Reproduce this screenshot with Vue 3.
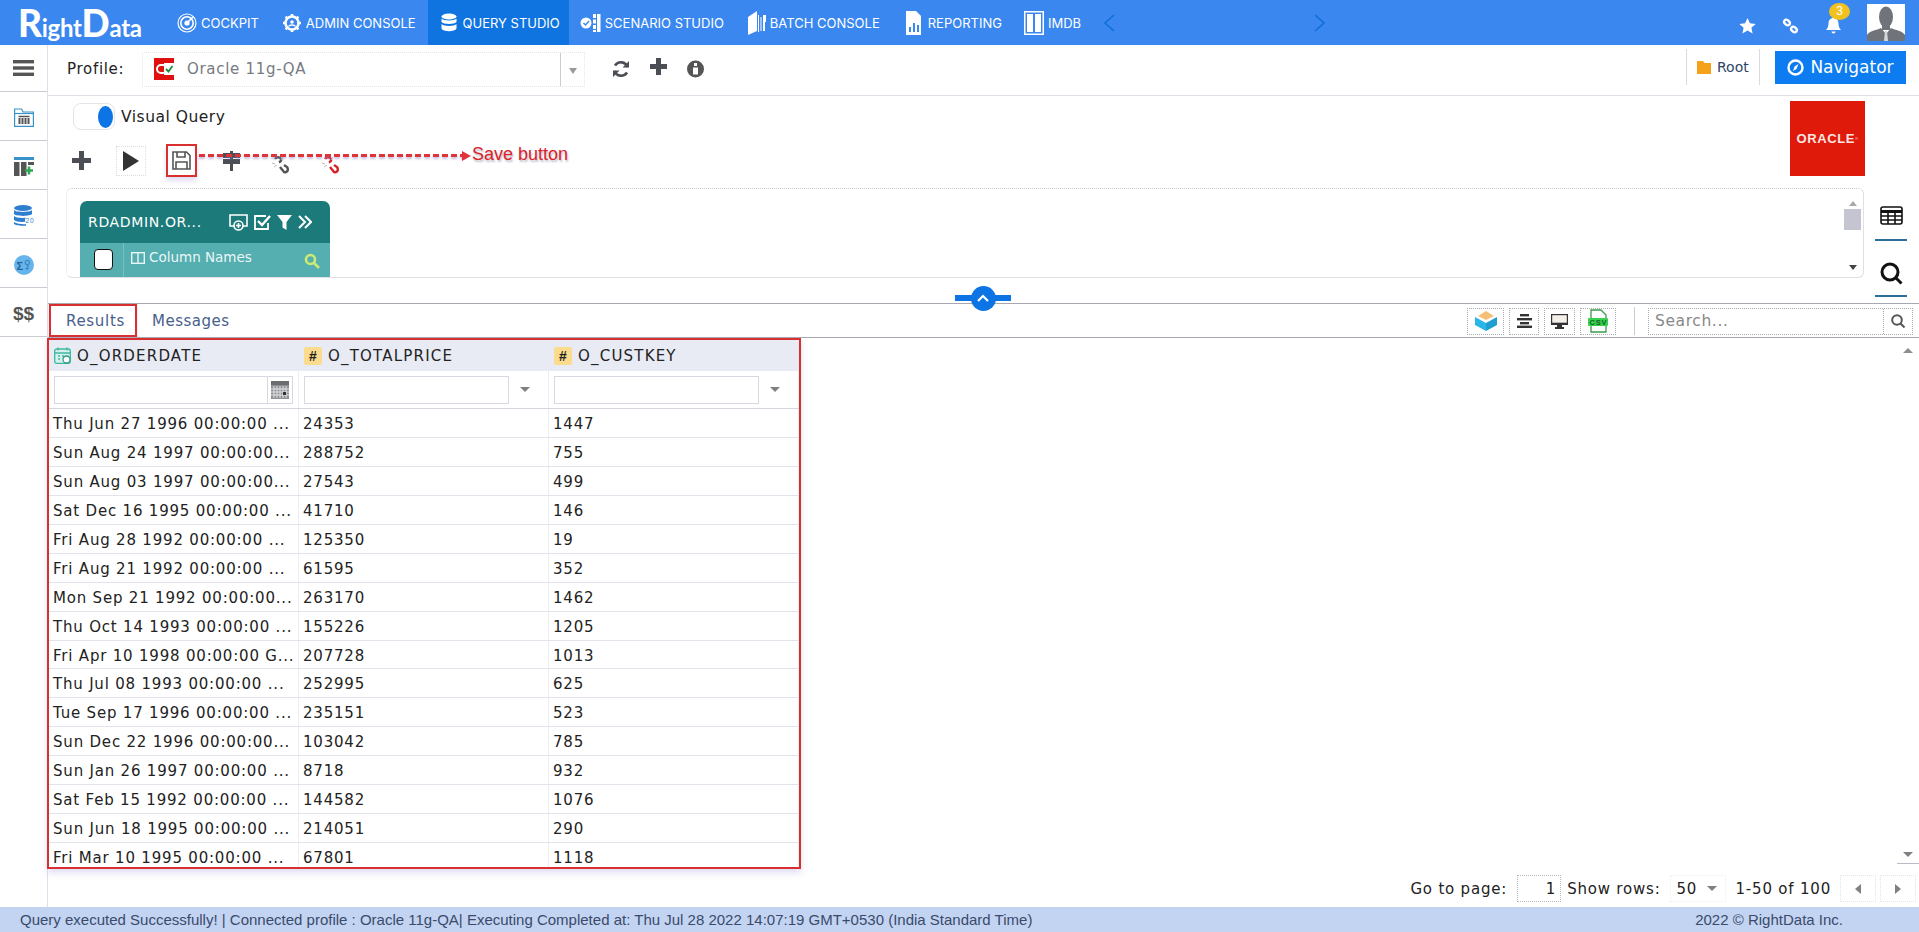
<script setup>
const navItems = [
  { id: 'cockpit', label: 'COCKPIT' },
  { id: 'admin', label: 'ADMIN CONSOLE' },
  { id: 'query', label: 'QUERY STUDIO', active: true },
  { id: 'scenario', label: 'SCENARIO STUDIO' },
  { id: 'batch', label: 'BATCH CONSOLE' },
  { id: 'reporting', label: 'REPORTING' },
  { id: 'imdb', label: 'IMDB' }
]

const rows = [
  ['Thu Jun 27 1996 00:00:00 ...', '24353', '1447'],
  ['Sun Aug 24 1997 00:00:00...', '288752', '755'],
  ['Sun Aug 03 1997 00:00:00...', '27543', '499'],
  ['Sat Dec 16 1995 00:00:00 ...', '41710', '146'],
  ['Fri Aug 28 1992 00:00:00 ...', '125350', '19'],
  ['Fri Aug 21 1992 00:00:00 ...', '61595', '352'],
  ['Mon Sep 21 1992 00:00:00...', '263170', '1462'],
  ['Thu Oct 14 1993 00:00:00 ...', '155226', '1205'],
  ['Fri Apr 10 1998 00:00:00 G...', '207728', '1013'],
  ['Thu Jul 08 1993 00:00:00 ...', '252995', '625'],
  ['Tue Sep 17 1996 00:00:00 ...', '235151', '523'],
  ['Sun Dec 22 1996 00:00:00...', '103042', '785'],
  ['Sun Jan 26 1997 00:00:00 ...', '8718', '932'],
  ['Sat Feb 15 1992 00:00:00 ...', '144582', '1076'],
  ['Sun Jun 18 1995 00:00:00 ...', '214051', '290'],
  ['Fri Mar 10 1995 00:00:00 ...', '67801', '1118']
]
</script>

<template>
  <div class="app">
    <header class="topbar">
      <div class="logo"><span class="logo-big">R</span><span class="logo-small">ight</span><span class="logo-big">D</span><span class="logo-small">ata</span></div>
      <nav class="nav">
        <a v-for="item in navItems" :key="item.id" class="nav-item" :class="[item.id, { active: item.active }]">
          <svg v-if="item.id === 'cockpit'" width="20" height="20" viewBox="0 0 20 20" fill="none" stroke="#fff"><circle cx="10" cy="10" r="9" stroke-width="1.2"/><circle cx="10" cy="10" r="6.2" stroke-width="1.6"/><circle cx="10" cy="10" r="2.6" fill="#fff" stroke="none"/><path d="M10 10 16 4" stroke-width="1.6"/></svg>
          <svg v-else-if="item.id === 'admin'" width="20" height="20" viewBox="0 0 20 20" fill="none" stroke="#fff"><circle cx="10" cy="10" r="6.5" stroke-width="2.6"/><path d="M10 1v3M10 16v3M1 10h3M16 10h3M3.6 3.6l2 2M14.4 14.4l2 2M3.6 16.4l2-2M14.4 5.6l2-2" stroke-width="2.6"/><circle cx="10" cy="9" r="1.8" fill="#fff" stroke="none"/><path d="M6.5 13.5c1-2 6-2 7 0" stroke-width="1.4"/></svg>
          <svg v-else-if="item.id === 'query'" width="16" height="19" viewBox="0 0 16 19" fill="#fff"><ellipse cx="8" cy="3.5" rx="7.5" ry="3"/><path d="M.5 5.6C2 8.2 14 8.2 15.5 5.6V9C14 11.6 2 11.6 .5 9zM.5 11C2 13.6 14 13.6 15.5 11v4.5C14 19 2 19 .5 15.5z"/></svg>
          <svg v-else-if="item.id === 'scenario'" width="21" height="20" viewBox="0 0 21 20" fill="#fff"><circle cx="6" cy="10" r="5.5"/><path d="M3.5 10l2 2 3.5-4" stroke="#3a87ef" stroke-width="1.4" fill="none"/><rect x="13" y="1" width="3" height="4"/><rect x="13" y="6.5" width="3" height="4"/><rect x="13" y="12" width="3" height="4"/><rect x="17" y="1" width="3.5" height="18"/><rect x="13" y="17" width="3" height="2"/></svg>
          <svg v-else-if="item.id === 'batch'" width="18" height="24" viewBox="0 0 18 24" fill="#fff"><path d="M0 6 9 0v20l-9 4z"/><path d="M10 4h1v17h-1zM12.500 6h1v14h-1zM15 4h3v7h-1v9h-2z"/></svg>
          <svg v-else-if="item.id === 'reporting'" width="15" height="24" viewBox="0 0 15 24" fill="#fff"><path d="M0 0h10l5 5v19H0z"/><path d="M3 21v-5h2v5zM7 21v-9h2v9zM11 21v-7h2v7z" fill="#3a87ef"/></svg>
          <svg v-else width="20" height="24" viewBox="0 0 20 24" fill="#fff"><path d="M0 0h20v24H0zM1.500 1.500v21h17v-21z"/><rect x="3" y="3" width="6" height="18"/><rect x="11" y="3" width="6" height="18"/></svg>
          <span>{{ item.label }}</span>
        </a>
        <svg class="nav-chevron" width="12" height="18" viewBox="0 0 12 18" fill="none" stroke="#0f6fd8" stroke-width="1.6"><path d="M11 1 2 9l9 8"/></svg>
      </nav>
      <svg class="nav-chevron right" width="11" height="18" viewBox="0 0 11 18" fill="none" stroke="#0f6fd8" stroke-width="1.6"><path d="M1 1l9 8-9 8"/></svg>
      <div class="top-actions">
        <svg width="17" height="16" viewBox="0 0 17 16" fill="#fff"><path d="M8.500 0l2.400 5.300 5.800.6-4.300 3.900 1.200 5.700-5.100-2.900-5.100 2.900 1.200-5.700L.3 5.900l5.800-.6z"/></svg>
        <svg width="17" height="16" viewBox="0 0 17 16" fill="none" stroke="#fff" stroke-width="2.400"><rect x="-3.200" y="-2.200" width="6.400" height="4.400" rx="2.200" transform="translate(5 4.500) rotate(40)"/><rect x="-3.200" y="-2.200" width="6.400" height="4.400" rx="2.200" transform="translate(12 11.500) rotate(40)"/></svg>
        <div class="bell">
          <svg width="17" height="17" viewBox="0 0 17 17" fill="#fff"><path d="M8.500 1C5 1 3.500 3.500 3.500 6.500c0 3-1 4.700-2.500 6.500h15c-1.500-1.800-2.500-3.500-2.500-6.500S12 1 8.500 1zM6.500 14.500h4a2 2 0 0 1-4 0z"/></svg>
          <span class="badge">3</span>
        </div>
        <div class="avatar">
          <svg width="38" height="37" viewBox="0 0 38 37"><ellipse cx="19" cy="13" rx="7" ry="10.500" fill="#70747a"/><path d="M15 21h8v5h-8z" fill="#70747a"/><path d="M0 37v-6c2-4 10-5 14-7l5 6 5-6c4 2 12 3 14 7v6z" fill="#70747a"/><path d="M18 27h2l1 10h-4z" fill="#d4d6d8"/></svg>
        </div>
      </div>
    </header>

    <div class="body">
      <aside class="sidebar">
        <div class="side-item first">
          <svg width="21" height="16" viewBox="0 0 21 16" fill="#555"><rect y="0" width="21" height="3.400"/><rect y="6.300" width="21" height="3.400"/><rect y="12.600" width="21" height="3.400"/></svg>
        </div>
        <div class="side-item">
          <svg width="20" height="19" viewBox="0 0 20 19" fill="none" stroke="#3a93c8" stroke-width="1.200"><path d="M.6 4V1h7l1.500 3h10.300v14.400H.6z"/><path d="M.6 5.500h18.800"/><path d="M4.500 8.500h11" stroke="#555" stroke-width="1.500"/><path d="M5.500 10v6M8.500 10v6M11.500 10v6M14.500 10v6" stroke="#555" stroke-width="2"/></svg>
        </div>
        <div class="side-item">
          <svg width="20" height="19" viewBox="0 0 20 19"><rect width="20" height="3" fill="#3a93c8"/><rect y="5" width="5.500" height="14" fill="#555"/><rect x="7" y="5" width="5.500" height="14" fill="#555"/><rect x="14" y="5" width="6" height="3" fill="#555"/><path d="M15 9.500v8M11 13.500h8" stroke="#2fa84f" stroke-width="2.600"/></svg>
        </div>
        <div class="side-item">
          <svg width="20" height="21" viewBox="0 0 20 21" fill="#2f7fd0"><ellipse cx="9" cy="3" rx="9" ry="3"/><path d="M0 5c2 2.500 16 2.500 18 0v4C16 11.500 2 11.500 0 9zM0 11c2 2.500 14 2.500 18 0v4c-4 2.500-16 2.500-18 0zM0 17c3 2 10 2.500 12 2v1.800C8 21 2 20.500 0 19z"/><circle cx="15.500" cy="15" r="4.500" fill="#fff"/><text x="11.500" y="17.500" font-size="6.500" fill="#2f7fd0" font-family="Liberation Sans">20</text></svg>
        </div>
        <div class="side-item">
          <svg width="20" height="20" viewBox="0 0 20 20"><circle cx="10" cy="10" r="10" fill="#66b5ea"/><text x="2.500" y="14.500" font-size="11" fill="#24639e" font-family="Liberation Sans" font-weight="700">Σ</text><text x="10.500" y="9.500" font-size="7" fill="#24639e" font-family="Liberation Sans">Q</text><text x="11" y="16" font-size="7" fill="#24639e" font-family="Liberation Sans">+</text></svg>
        </div>
        <div class="side-item money">$$</div>
      </aside>

      <main class="main">
        <section class="profile-bar">
          <span class="profile-label">Profile:</span>
          <div class="profile-select">
            <svg width="20" height="22" viewBox="0 0 20 22"><rect width="20" height="22" fill="#e0100f"/><rect x="3" y="7" width="10" height="8" rx="4" fill="none" stroke="#fff" stroke-width="2"/><rect x="10" y="5" width="10" height="12" fill="#fff"/><path d="M12 11l2.500 2.500L18.500 8" fill="none" stroke="#1c8c3c" stroke-width="1.800"/></svg>
            <span class="profile-name">Oracle 11g-QA</span>
            <span class="profile-arrow"></span>
          </div>
          <svg class="profile-refresh" width="18" height="18" viewBox="0 0 18 18" fill="none" stroke="#4b4f55" stroke-width="2.600"><path d="M15.500 7A7 7 0 0 0 3 5.500M2.500 11A7 7 0 0 0 15 12.500"/><path d="M17 1v6.500h-6.500zM1 17v-6.500h6.500z" fill="#4b4f55" stroke="none"/></svg>
          <svg class="profile-plus" width="17" height="17" viewBox="0 0 17 17" fill="#4b4f55"><path d="M6 0h5v6h6v5h-6v6H6v-6H0V6h6z"/></svg>
          <svg class="profile-info" width="17" height="18" viewBox="0 0 17 18"><circle cx="8.500" cy="9" r="8.500" fill="#555"/><rect x="6" y="7.500" width="5" height="7" fill="#fff"/><rect x="7" y="3" width="3" height="3" fill="#fff"/></svg>
          <div class="profile-right">
            <div class="root-box">
              <svg width="14" height="13" viewBox="0 0 14 13" fill="#f5a11c"><path d="M0 0h6l1.500 2H14v11H0z"/></svg>
              <span>Root</span>
            </div>
            <button class="navigator">
              <svg width="17" height="17" viewBox="0 0 17 17" fill="none" stroke="#fff" stroke-width="2.400"><circle cx="8.500" cy="8.500" r="7"/><path d="M11.500 5l-2 5-3.500 2 1.500-4.500z" fill="#fff" stroke="none"/></svg>
              <span>Navigator</span>
            </button>
          </div>
        </section>

        <section class="query-area">
          <div class="query-top">
            <div class="query-controls">
              <div class="visual-row">
                <div class="toggle"><span class="toggle-knob"></span></div>
                <span>Visual Query</span>
              </div>
              <div class="toolbar">
                <svg class="tool-plus" width="19" height="19" viewBox="0 0 19 19" fill="#4b4f55"><path d="M7 0h5v7h7v5h-7v7H7v-7H0V7h7z"/></svg>
                <div class="tool-box play"><svg width="16" height="20" viewBox="0 0 16 20" fill="#333"><path d="M0 0l16 10L0 20z"/></svg></div>
                <div class="tool-box save">
                  <svg width="19" height="19" viewBox="0 0 19 19" fill="none" stroke="#555" stroke-width="1.600"><path d="M1 1h13.500L18 4.500V18H1z"/><path d="M5 1v5h8V1M4 18v-7h11v7"/></svg>
                </div>
                <svg class="tool-sign" width="20" height="20" viewBox="0 0 20 20" fill="#4b4f55"><rect x="8" y="0" width="3" height="20"/><path d="M1 2h17v5H1zM1 8h17v5H1z"/></svg>
                <svg class="tool-link" width="20" height="20" viewBox="0 0 20 20" fill="none" stroke="#555" stroke-width="2.400"><path d="M4 5a3.500 3.500 0 0 1 6 0c.5 1.500-1 3-2 3.500M9 13l4 5c3 1 5-2 3-5l-3-2"/><path d="M1 9l3 1M3 13l3-2M12 3l-2 3" stroke="#bbb" stroke-width="1"/></svg>
                <svg class="tool-unlink" width="20" height="20" viewBox="0 0 20 20" fill="none" stroke="#d8232a" stroke-width="2.400"><path d="M4 5a3.500 3.500 0 0 1 6 0c.5 1.500-1 3-2 3.500M9 13l4 5c3 1 5-2 3-5l-3-2"/><path d="M1 9l3 1M3 13l3-2M12 3l-2 3" stroke="#bbb" stroke-width="1"/></svg>
                <div class="save-arrow"><span class="arrow-line"></span><span class="arrow-head"></span><span class="arrow-label">Save button</span></div>
              </div>
            </div>
            <div class="oracle-logo">ORACLE<sup>®</sup></div>
          </div>

          <div class="query-bottom">
            <div class="canvas">
              <div class="table-card">
                <div class="card-head">
                  <span class="card-title">RDADMIN.OR...</span>
                  <svg width="19" height="17" viewBox="0 0 19 17" fill="none" stroke="#fff" stroke-width="1.600"><path d="M6 12H1V1h17v11h-5"/><circle cx="9.500" cy="11.500" r="4.500" fill="#1c7a7a"/><path d="M9.500 9v5M7 11.500h5"/></svg>
                  <svg width="17" height="16" viewBox="0 0 17 16" fill="none" stroke="#fff" stroke-width="1.800"><path d="M14 9v6H1V2h11"/><path d="M4 7l4 4 8-9" stroke-width="2.400"/></svg>
                  <svg width="15" height="15" viewBox="0 0 15 15" fill="#fff"><path d="M0 0h15L9.500 7v8l-4-2.500V7z"/></svg>
                  <svg width="14" height="14" viewBox="0 0 14 14" fill="none" stroke="#fff" stroke-width="2"><path d="M1 1l6 6-6 6M7 1l6 6-6 6"/></svg>
                </div>
                <div class="card-sub">
                  <span class="card-check"><i></i></span>
                  <svg class="card-col" width="14" height="12" viewBox="0 0 14 12" fill="none" stroke="#e8f6f6" stroke-width="1.400"><rect x=".7" y=".7" width="12.600" height="10.600"/><path d="M7 .7v10.600"/></svg>
                  <span class="card-colnames">Column Names</span>
                  <svg class="card-search" width="16" height="16" viewBox="0 0 16 16" fill="none" stroke="#cdea72" stroke-width="2.600"><circle cx="6.500" cy="6.500" r="4.500"/><path d="M10 10l5 5"/></svg>
                </div>
              </div>
              <div class="canvas-scroll">
                <span class="tri up"></span>
                <span class="scroll-thumb"></span>
                <span class="tri down dark"></span>
              </div>
            </div>
            <div class="side-tools">
              <div class="side-tool">
                <svg width="23" height="19" viewBox="0 0 23 19" fill="none" stroke="#111" stroke-width="1.600"><rect x="1" y="1" width="21" height="17" rx="2"/><path d="M1 5.500h21" stroke-width="3"/><path d="M1 10h21M1 14h21M8 5v13M15 5v13"/></svg>
              </div>
              <div class="side-tool">
                <svg width="23" height="23" viewBox="0 0 23 23" fill="none" stroke="#111" stroke-width="3"><circle cx="10" cy="10" r="8"/><path d="M15.500 15.500l6 6"/></svg>
              </div>
            </div>
          </div>
        </section>

        <div class="splitter">
          <div class="split-bar"><span class="split-knob"><svg width="12" height="8" viewBox="0 0 12 8" fill="none" stroke="#fff" stroke-width="2.200"><path d="M1 7l5-5 5 5"/></svg></span></div>
        </div>

        <section class="tabs-row">
          <div class="tab active">Results</div>
          <div class="tab">Messages</div>
          <div class="grid-tools">
            <div class="grid-tool w37">
              <svg width="22" height="20" viewBox="0 0 22 20"><path d="M11 0l8 5-8 4-8-4z" fill="#f4c078"/><path d="M0 6l11 6v8L0 14z" fill="#29b6e8"/><path d="M22 6l-11 6v8l11-6z" fill="#1e9fd0"/></svg>
            </div>
            <div class="grid-tool w30">
              <svg width="15" height="14" viewBox="0 0 15 14" fill="#333"><rect x="3" y="0" width="9" height="2.400"/><rect x="0" y="4" width="15" height="2.400"/><rect x="3" y="8" width="9" height="2.400"/><rect x="0" y="11.600" width="15" height="2.400"/></svg>
            </div>
            <div class="grid-tool w31">
              <svg width="17" height="15" viewBox="0 0 17 15" fill="#333"><path d="M0 0h17v11H0z"/><rect x="1.200" y="1.200" width="14.600" height="7.500" fill="#f4efe8"/><path d="M6 11h5v2h2v2H4v-2h2z"/></svg>
            </div>
            <div class="grid-tool w36">
              <svg width="20" height="24" viewBox="0 0 20 24" fill="none"><path d="M3 1h10l5 5v17H3z" stroke="#3a9a4d" stroke-width="1.300" fill="#fff"/><rect x="0" y="9" width="20" height="8" rx="1" fill="#38d04c"/><text x="1.500" y="15.700" font-size="7.500" font-weight="700" fill="#14622a" font-family="Liberation Sans">CSV</text></svg>
            </div>
            <span class="tools-sep"></span>
            <div class="search-box">
              <span class="search-text">Search...</span>
              <span class="search-btn"><svg width="14" height="14" viewBox="0 0 14 14" fill="none" stroke="#555" stroke-width="2"><circle cx="6" cy="6" r="4.800"/><path d="M9.500 9.500l4 4"/></svg></span>
            </div>
          </div>
        </section>

        <section class="results">
          <div class="grid-box">
            <div class="grid-head">
              <div class="head-cell">
                <svg width="17" height="17" viewBox="0 0 17 17" fill="none" stroke="#3fb8a0" stroke-width="1.300"><rect x=".7" y="2" width="15.600" height="14.300" rx="2" fill="#d8f0ec"/><path d="M.7 6h15.600M4 .5v3M13 .5v3M4 9h2M8 9h2M4 12h2"/><circle cx="12.500" cy="12.500" r="3.500" fill="#fff" stroke="#2f9a84"/></svg>
                <span>O_ORDERDATE</span>
              </div>
              <div class="head-cell"><span class="hash">#</span><span>O_TOTALPRICE</span></div>
              <div class="head-cell"><span class="hash">#</span><span>O_CUSTKEY</span></div>
            </div>
            <div class="grid-filter">
              <div class="filter-cell">
                <div class="filter-input date">
                  <span class="cal-btn"><svg width="18" height="18" viewBox="0 0 18 18"><rect width="18" height="18" fill="#8f9094"/><rect y="0" width="18" height="4" fill="#6b6c70"/><path d="M3 5v12M6 5v12M9 5v12M12 5v12M15 5v12M0 8h18M0 11h18M0 14h18" stroke="#e4e4e6"/><rect x="12" y="11" width="3" height="3" fill="#333"/></svg></span>
                </div>
              </div>
              <div class="filter-cell">
                <div class="filter-input"></div>
                <span class="filter-drop"><span class="tri down wide"></span></span>
              </div>
              <div class="filter-cell">
                <div class="filter-input"></div>
                <span class="filter-drop"><span class="tri down wide"></span></span>
              </div>
            </div>
            <div class="grid-rows">
              <div v-for="row in rows" :key="row[0]" class="grid-row">
                <div v-for="(cell, i) in row" :key="i" class="grid-cell">{{ cell }}</div>
              </div>
            </div>
          </div>
          <div class="results-scroll">
            <span class="tri up wide"></span>
            <span class="tri down wide"></span>
          </div>
        </section>

        <section class="pager">
          <span>Go to page:</span>
          <span class="page-input">1</span>
          <span class="show-rows">Show rows:</span>
          <span class="rows-select">50<span class="tri down wide"></span></span>
          <span class="page-range">1-50 of 100</span>
          <span class="page-btn"><span class="tri left"></span></span>
          <span class="page-btn"><span class="tri right"></span></span>
        </section>
      </main>
    </div>

    <footer class="statusbar">
      <span>Query executed Successfully! | Connected profile : Oracle 11g-QA| Executing Completed at: Thu Jul 28 2022 14:07:19 GMT+0530 (India Standard Time)</span>
      <span class="copyright">2022 © RightData Inc.</span>
    </footer>
  </div>
</template>

<style>
html, body {
  margin: 0;
  background: #fff;
  overflow: hidden;
}
</style>

<style scoped>
.app {
  width: 1919px;
  height: 932px;
  display: flex;
  flex-direction: column;
  overflow: hidden;
  font-family: "DejaVu Sans", Verdana, sans-serif;
  font-size: 15px;
  letter-spacing: 0.8px;
  color: #222;
  background: #fff;
}

/* top bar */
.topbar {
  height: 45px;
  flex: none;
  display: flex;
  align-items: center;
  background: #3a87ef;
  color: #fff;
  padding-left: 18px;
}
.logo {
  width: 159px;
  height: 45px;
  flex: none;
  display: flex;
  align-items: baseline;
  font-family: "Lato", sans-serif;
  font-weight: 700;
  letter-spacing: -0.3px;
  white-space: nowrap;
}
.logo-small {
  font-size: 24px;
  line-height: 30px;
}
.logo-big {
  font-size: 37px;
  line-height: 45px;
  font-weight: 900;
}
.nav {
  display: flex;
  align-items: stretch;
  height: 45px;
}
.nav-item {
  display: flex;
  align-items: center;
  gap: 4px;
  font-family: "Inter", sans-serif;
  font-size: 13px;
  letter-spacing: 0;
  color: #fff;
  white-space: nowrap;
  padding: 0 11px 0 0;
  margin-right: 11px;
}
.nav-item.cockpit { margin-right: 12px; }
.nav-item.admin { margin-right: 1px; }
.nav-item.active {
  background: #0f74e0;
  padding: 0 9px 0 13px;
  margin-right: 11px;
  gap: 6px;
}
.nav-item.scenario { margin-right: 13px; }
.nav-item.batch { margin-right: 15px; }
.nav-item.reporting { margin-right: 11px; gap: 7px; }
.nav-chevron { align-self: center; }
.nav-chevron.right { margin-left: 199px; }
.top-actions {
  margin-left: auto;
  display: flex;
  align-items: center;
  gap: 26px;
  padding-right: 14px;
}
.top-actions > svg { margin-top: 6px; }
.bell {
  position: relative;
  width: 17px;
  height: 17px;
  margin-top: 6px;
  margin-right: -1px;
}
.badge {
  position: absolute;
  left: 4px;
  top: -14px;
  width: 21px;
  height: 17px;
  border-radius: 50%;
  background: #f3c11e;
  color: #fff;
  font: 12px/17px "Liberation Sans", sans-serif;
  letter-spacing: 0;
  text-align: center;
}
.avatar {
  width: 38px;
  height: 37px;
  background: #fff;
  overflow: hidden;
}

/* layout */
.body {
  flex: 1;
  display: flex;
  min-height: 0;
}
.sidebar {
  width: 47px;
  flex: none;
  border-right: 1px solid #dde1ea;
}
.side-item {
  height: 49px;
  display: flex;
  align-items: center;
  justify-content: center;
  box-sizing: border-box;
  padding-top: 3px;
  border-bottom: 1px solid #c9ccd2;
}
.side-item.first { height: 47px; padding-top: 0; }
.side-item.money {
  font: 700 19px "Liberation Sans", sans-serif;
  letter-spacing: 0;
  color: #555;
}
.main {
  flex: 1;
  min-width: 0;
  display: flex;
  flex-direction: column;
}

/* profile */
.profile-bar {
  height: 48px;
  flex: none;
  box-sizing: content-box;
  display: flex;
  align-items: center;
  border-bottom: 1px solid #dfe1e8;
  padding: 0 0 2px 19px;
}
.profile-label {
  width: 75px;
  font-size: 15px;
  letter-spacing: 0.7px;
}
.profile-select {
  width: 443px;
  height: 35px;
  flex: none;
  display: flex;
  align-items: center;
  box-sizing: border-box;
  padding-left: 11px;
  border: 1px dotted #e6e6ea;
}
.profile-name {
  margin-left: 13px;
  color: #777b80;
  font-size: 15px;
  letter-spacing: 0.7px;
}
.profile-arrow {
  margin-left: auto;
  width: 23px;
  height: 33px;
  border-left: 1px solid #ccc;
  position: relative;
}
.profile-arrow::after {
  content: "";
  position: absolute;
  left: 8px;
  top: 15px;
  border: 4px solid transparent;
  border-top: 6px solid #999;
  border-bottom: 0;
}
.profile-refresh { margin-left: 27px; }
.profile-plus { margin-left: 20px; margin-bottom: 5px; }
.profile-info { margin-left: 20px; }
.profile-right {
  margin-left: auto;
  margin-bottom: 4px;
  display: flex;
  align-items: center;
  padding-right: 13px;
}
.root-box {
  height: 36px;
  width: 74px;
  box-sizing: border-box;
  display: flex;
  align-items: center;
  gap: 6px;
  padding-left: 10px;
  border-left: 1px solid #d9d9de;
  border-right: 1px solid #d9d9de;
  color: #2b4468;
  font-size: 14px;
  letter-spacing: 0;
}
.navigator {
  margin-left: 15px;
  width: 131px;
  height: 33px;
  border: 0;
  background: #0c7cf0;
  color: #fff;
  display: flex;
  align-items: center;
  justify-content: center;
  gap: 6px;
  font-family: inherit;
  font-size: 17px;
  letter-spacing: 0;
  padding: 0;
}

/* query area */
.query-area {
  height: 207px;
  flex: none;
  display: flex;
  flex-direction: column;
  box-sizing: border-box;
  padding-left: 18px;
}
.query-top {
  height: 92px;
  flex: none;
  display: flex;
  justify-content: space-between;
  padding-right: 54px;
}
.query-controls {
  display: flex;
  flex-direction: column;
  flex: 1;
}
.visual-row {
  display: flex;
  align-items: center;
  gap: 6px;
  height: 27px;
  margin: 7px 0 0 7px;
  font-size: 15.500px;
  letter-spacing: 0.5px;
}
.toggle {
  width: 42px;
  height: 27px;
  box-sizing: border-box;
  border: 1px solid #e2e4ea;
  border-radius: 8px;
  display: flex;
  align-items: center;
  justify-content: flex-end;
  padding-right: 1px;
}
.toggle-knob {
  width: 15px;
  height: 22px;
  border-radius: 50%;
  background: #0c74e4;
}
.toolbar {
  position: relative;
  display: flex;
  align-items: center;
  height: 33px;
  margin-top: 14px;
  padding-left: 6px;
}
.tool-box {
  height: 30px;
  display: flex;
  align-items: center;
  justify-content: center;
  box-sizing: border-box;
}
.tool-box.play {
  width: 30px;
  margin-left: 25px;
  border: 1px dotted #dcdcdc;
}
.tool-box.save {
  width: 31px;
  height: 33px;
  margin-left: 20px;
  border: 2px solid #d9302f;
  box-shadow: 0 4px 5px rgba(170, 160, 220, 0.35);
}
.tool-sign { margin-left: 25px; }
.tool-link { margin-left: 29px; margin-top: 6px; }
.tool-unlink { margin-left: 30px; margin-top: 6px; }
/* annotation drawn over the toolbar */
.save-arrow {
  position: absolute;
  left: 133px;
  top: 7px;
  width: 272px;
  height: 10px;
}
.arrow-line {
  position: absolute;
  left: 0;
  right: 5px;
  top: 3px;
  border-top: 3px dashed #e2333a;
  filter: drop-shadow(0 2px 1px rgba(140, 130, 200, 0.5));
}
.arrow-head {
  position: absolute;
  right: 0;
  top: 0;
  border: 5px solid transparent;
  border-left: 9px solid #e2333a;
  border-right: 0;
}
.arrow-label {
  position: absolute;
  left: 273px;
  top: -7px;
  font: 18px "Liberation Sans", sans-serif;
  letter-spacing: 0;
  color: #d9222a;
  white-space: nowrap;
  text-shadow: 1px 2px 2px rgba(90, 80, 110, 0.4);
}
.oracle-logo {
  width: 75px;
  height: 75px;
  margin-top: 5px;
  background: #e01a0a;
  color: #fde6e2;
  display: flex;
  align-items: center;
  justify-content: center;
  font: 700 13px "Liberation Sans", sans-serif;
  letter-spacing: 0.6px;
  flex: none;
}
.oracle-logo sup { font-size: 4px; font-weight: 400; }
.query-bottom {
  display: flex;
  height: 90px;
  flex: none;
}
.canvas {
  width: 1798px;
  height: 90px;
  flex: none;
  box-sizing: border-box;
  border: 1px solid #dfe0e4;
  border-style: dotted solid solid dotted;
  border-top-color: #c9c9cc;
  border-radius: 6px;
  padding: 12px 0 0 13px;
  display: flex;
  justify-content: space-between;
  overflow: hidden;
}
.table-card {
  width: 250px;
  height: 80px;
  border-radius: 7px 7px 0 0;
  overflow: hidden;
  flex: none;
}
.card-head {
  height: 42px;
  background: #1c7a7a;
  display: flex;
  align-items: center;
  gap: 6px;
  color: #fff;
  padding-left: 8px;
}
.card-title {
  width: 135px;
  font-size: 14px;
  letter-spacing: 0.65px;
  white-space: nowrap;
}
.card-sub {
  height: 38px;
  background: #55aeb0;
  display: flex;
  align-items: flex-start;
  position: relative;
}
.card-check {
  width: 44px;
  height: 38px;
  flex: none;
  box-sizing: border-box;
  border-right: 1px solid #78bfc0;
  padding: 6px 0 0 14px;
}
.card-check i {
  display: block;
  width: 19px;
  height: 21px;
  box-sizing: border-box;
  background: #fff;
  border: 1px solid #111;
  border-radius: 4px;
}
.card-col { margin: 9px 0 0 7px; }
.card-colnames {
  margin: 6px 0 0 4px;
  color: #eaf7f7;
  font-size: 13.500px;
  letter-spacing: 0;
}
.card-search { margin: 10px 10px 0 auto; }
.canvas-scroll {
  width: 17px;
  height: 78px;
  margin-right: 2px;
  display: flex;
  flex-direction: column;
  align-items: center;
}
.scroll-thumb {
  width: 17px;
  height: 21px;
  margin-top: 3px;
  background: #c4c5d0;
}
.canvas-scroll .tri.down { margin-top: auto; margin-bottom: 9px; }
.tri {
  display: block;
  width: 0;
  height: 0;
  border: 4px solid transparent;
}
.tri.up { border-top: 0; border-bottom: 5px solid #a9a9a9; }
.tri.down { border-bottom: 0; border-top: 5px solid #808080; }
.tri.dark { border-top-color: #444; }
.tri.wide { border-left-width: 5px; border-right-width: 5px; border-top-width: 5px; }
.tri.up.wide { border-top-width: 0; border-bottom-width: 5px; border-bottom-color: #8f8f8f; }
.tri.left { border-left: 0; border-right: 6px solid #808080; border-top-width: 5px; border-bottom-width: 5px; }
.tri.right { border-right: 0; border-left: 6px solid #808080; border-top-width: 5px; border-bottom-width: 5px; }
.side-tools {
  width: 36px;
  margin-left: 11px;
  display: flex;
  flex-direction: column;
}
.side-tool {
  flex: none;
  box-sizing: border-box;
  width: 32px;
  padding-left: 5px;
  border-bottom: 2px solid #2c6e9a;
}
.side-tool:first-child { height: 53px; padding-top: 18px; }
.side-tool:last-child { height: 56px; padding-top: 21px; }

/* splitter */
.splitter {
  height: 1px;
  flex: none;
  background: #a8a9b0;
  display: flex;
  justify-content: center;
  position: relative;
}
.split-bar {
  position: absolute;
  left: 907px;
  top: -8px;
  width: 56px;
  height: 6px;
  background: #0c74e4;
  display: flex;
  align-items: center;
  justify-content: center;
}
.split-knob {
  width: 25px;
  height: 25px;
  border-radius: 50%;
  background: #0c74e4;
  flex: none;
  display: flex;
  align-items: center;
  justify-content: center;
}

/* tabs */
.tabs-row {
  height: 34px;
  flex: none;
  display: flex;
  align-items: stretch;
  border-bottom: 1px solid #a8a9b0;
  box-sizing: border-box;
  padding-left: 1px;
}
.tab {
  display: flex;
  align-items: center;
  font-size: 15px;
  letter-spacing: 0.5px;
  color: #47608c;
  padding: 0 15px;
}
.tab.active {
  width: 88px;
  height: 33px;
  box-sizing: border-box;
  justify-content: center;
  border: 2px solid #d9302f;
  padding: 0 0 0 5px;
  letter-spacing: 0.7px;
  box-shadow: 0 1px 3px rgba(170, 160, 220, 0.4);
}
.grid-tools {
  margin-left: auto;
  margin-top: 1px;
  display: flex;
  align-items: center;
  gap: 5px;
  padding-right: 6px;
}
.grid-tool {
  height: 27px;
  display: flex;
  align-items: center;
  justify-content: center;
  box-sizing: border-box;
  border: 1px dotted #a9a9b0;
}
.w37 { width: 37px; }
.w30 { width: 30px; }
.w31 { width: 31px; }
.w36 { width: 36px; }
.tools-sep {
  width: 1px;
  height: 28px;
  background: #ccc;
  margin: 0 8px 0 13px;
}
.search-box {
  width: 265px;
  height: 27px;
  box-sizing: border-box;
  border: 1px dotted #a9a9b0;
  display: flex;
  align-items: center;
  justify-content: space-between;
  padding-left: 6px;
}
.search-text {
  color: #888;
  font-size: 15.500px;
  letter-spacing: 0.6px;
}
.search-btn {
  width: 28px;
  height: 25px;
  display: flex;
  align-items: center;
  justify-content: center;
  border-left: 1px dotted #a9a9b0;
}

/* results grid */
.results {
  flex: 1;
  min-height: 0;
  display: flex;
  justify-content: space-between;
}
.grid-box {
  width: 754px;
  height: 531px;
  box-sizing: border-box;
  margin-left: -1px;
  border: 2px solid #d9302f;
  box-shadow: 0 4px 7px rgba(170, 160, 220, 0.35);
  overflow: hidden;
  flex: none;
}
.grid-head {
  display: grid;
  grid-template-columns: repeat(3, 250px);
  height: 31px;
  background: #e8eaf4;
}
.head-cell {
  display: flex;
  align-items: center;
  gap: 6px;
  padding-left: 5px;
  color: #222;
  letter-spacing: 1.2px;
}
.hash {
  width: 18px;
  height: 18px;
  background: #fbdc8e;
  border-radius: 2px;
  font: 700 14px/18px "Liberation Sans", sans-serif;
  letter-spacing: 0;
  text-align: center;
}
.grid-filter {
  display: grid;
  grid-template-columns: repeat(3, 250px);
  height: 38px;
  box-sizing: border-box;
  border-bottom: 1px solid #d4d6de;
}
.filter-cell {
  display: flex;
  align-items: center;
  padding-left: 5px;
  border-right: 1px solid #eceef3;
}
.filter-input {
  width: 205px;
  height: 28px;
  box-sizing: border-box;
  border: 1px solid #d6d8e2;
  display: flex;
  justify-content: flex-end;
}
.filter-input.date { width: 239px; }
.cal-btn {
  width: 24px;
  height: 26px;
  border-left: 1px solid #d6d8e2;
  display: flex;
  align-items: center;
  justify-content: center;
}
.filter-drop {
  width: 28px;
  height: 28px;
  margin-left: 2px;
  display: flex;
  align-items: center;
  justify-content: center;
}
.grid-rows { height: 460px; overflow: hidden; }
.grid-row {
  display: grid;
  grid-template-columns: repeat(3, 250px);
  height: 28.950px;
  box-sizing: border-box;
  border-bottom: 1px solid #e2e4ec;
}
.grid-cell {
  line-height: 30px;
  padding-left: 4px;
  border-right: 1px solid #eceef3;
  white-space: nowrap;
  overflow: hidden;
}
.results-scroll {
  width: 22px;
  height: 526px;
  box-sizing: border-box;
  padding: 10px 0 6px;
  border-bottom: 1px solid #b9bcc8;
  display: flex;
  flex-direction: column;
  justify-content: space-between;
  align-items: center;
}

/* pager */
.pager {
  height: 37px;
  flex: none;
  display: flex;
  align-items: center;
  justify-content: flex-end;
  padding-right: 3px;
}
.page-input {
  width: 44px;
  height: 27px;
  margin-left: 10px;
  box-sizing: border-box;
  border: 1px dotted #b8b8b8;
  text-align: right;
  padding-right: 4px;
  line-height: 27px;
}
.show-rows { margin-left: 6px; }
.rows-select {
  width: 56px;
  height: 27px;
  margin-left: 9px;
  box-sizing: border-box;
  padding-left: 6px;
  display: flex;
  align-items: center;
  gap: 10px;
  border: 1px dotted #eee;
}
.page-range { margin: 0 9px 0 10px; }
.page-btn {
  width: 36px;
  height: 27px;
  box-sizing: border-box;
  border: 1px dotted #e4e4e4;
  display: flex;
  align-items: center;
  justify-content: center;
}
.page-btn + .page-btn { margin-left: 4px; }

/* status bar */
.statusbar {
  height: 25px;
  flex: none;
  background: #c2d4f2;
  display: flex;
  align-items: center;
  justify-content: space-between;
  padding: 0 76px 0 20px;
  font: 15px "Liberation Sans", sans-serif;
  letter-spacing: 0;
  color: #3b4a6b;
}
</style>
